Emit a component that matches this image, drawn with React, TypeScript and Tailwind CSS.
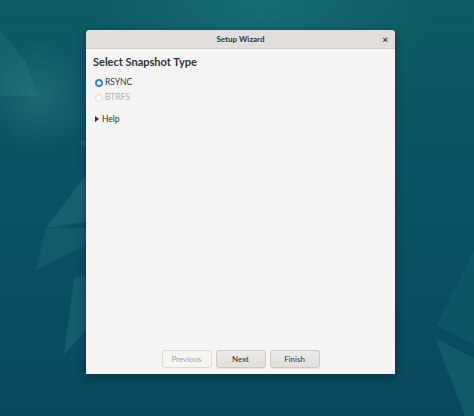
import React from 'react';

// Wallpaper shards drawn as SVG on top of the teal gradient
const Wallpaper: React.FC = () => (
  <svg className="absolute inset-0" width="474" height="416" viewBox="0 0 474 416">
    <defs>
      <radialGradient id="glow" cx="38" cy="95" r="55" gradientUnits="userSpaceOnUse">
        <stop offset="0" stopColor="#3a8f86" stopOpacity="0.35" />
        <stop offset="1" stopColor="#3a8f86" stopOpacity="0" />
      </radialGradient>
      <radialGradient id="topglow" cx="260" cy="0" r="170" gradientUnits="userSpaceOnUse">
        <stop offset="0" stopColor="#1f7a78" stopOpacity="0.55" />
        <stop offset="1" stopColor="#1f7a78" stopOpacity="0" />
      </radialGradient>
    </defs>
    <rect width="474" height="416" fill="url(#topglow)" />
    <polygon points="0,30 26,62 38,96 0,96" fill="#2d8580" opacity="0.25" />
    <rect width="474" height="416" fill="url(#glow)" />
    <polygon points="86,175 46,228 86,222" fill="#4a9a96" opacity="0.22" />
    <polygon points="86,228 46,228 36,270 86,245" fill="#3f8e8c" opacity="0.18" />
    <polygon points="86,275 74,278 64,355 86,330" fill="#2f8682" opacity="0.3" />
    <polygon points="78,142 86,140 86,146" fill="#4a9a96" opacity="0.2" />
    <polygon points="474,250 436,325 474,345" fill="#1b6a72" opacity="0.3" />
    <polygon points="435,338 474,358 474,416 465,416" fill="#1f7a7a" opacity="0.35" />
  </svg>
);

const WizardButton: React.FC<{ label: string; disabled?: boolean }> = ({ label, disabled }) => (
  <button
    disabled={disabled}
    className={
      disabled
        ? 'w-[50px] h-[18px] rounded-[3px] border border-[#dcd9d5] bg-[#f6f5f4] text-[8px] text-[#a3a3a0]'
        : 'w-[50px] h-[18px] rounded-[3px] border border-[#cdc7c2] bg-gradient-to-b from-[#edebe9] to-[#e2dfdc] text-[8px] text-[#2e3436] shadow-[0_1px_0_rgba(0,0,0,0.06)]'
    }
  >
    {label}
  </button>
);

export default function App() {
  return (
    <div
      className="relative w-[474px] h-[416px] overflow-hidden bg-gradient-to-b from-[#0d5c62] via-[#0a5164] to-[#08485d]"
      style={{ fontFamily: 'Lato, "Noto Sans", sans-serif' }}
    >
      <Wallpaper />
      <div className="relative pt-[30px] pl-[86px]">
        <div className="w-[309px] h-[344px] flex flex-col bg-[#f6f5f4] rounded-t-[4px] shadow-[0_2px_8px_rgba(0,0,0,0.35)] overflow-hidden">
          {/* title bar */}
          <div className="relative h-[19px] flex items-center justify-center bg-[#e1dedb] border-b border-[#cfcbc6]">
            <span className="text-[8px] font-bold text-[#2e3436]">Setup Wizard</span>
            <span className="absolute right-[7px] top-[3px] text-[10px] leading-[12px] font-bold text-[#2e3436]">×</span>
          </div>

          {/* page */}
          <div className="flex-1 flex flex-col px-[7px] pt-[5px]">
            <h1 className="text-[11px] font-bold text-[#2e3436] leading-[16px]">Select Snapshot Type</h1>

            <div className="mt-[7px] flex flex-col gap-[4px] pl-[2px]">
              <label className="flex items-center gap-[2px] h-[11px]">
                <span className="w-[8px] h-[8px] rounded-full border-[2px] border-[#3584e4] bg-white" />
                <span className="text-[8.5px] text-[#2e3436]">RSYNC</span>
              </label>
              <label className="flex items-center gap-[2px] h-[11px]">
                <span className="w-[8px] h-[8px] rounded-full border border-[#dcd9d5] bg-[#fafafa]" />
                <span className="text-[8.5px] text-[#b2b2ae]">BTRFS</span>
              </label>
            </div>

            <div className="mt-[10px] flex items-center gap-[3px] pl-[2px]">
              <svg width="4" height="6" viewBox="0 0 4 6">
                <polygon points="0,0 4,3 0,6" fill="#2e3436" />
              </svg>
              <span className="text-[8.5px] text-[#2e3436]">Help</span>
            </div>

            <div className="flex-1" />

            <div className="flex justify-center gap-[4px] pb-[6px]">
              <WizardButton label="Previous" disabled />
              <WizardButton label="Next" />
              <WizardButton label="Finish" />
            </div>
          </div>
        </div>
      </div>
    </div>
  );
}
